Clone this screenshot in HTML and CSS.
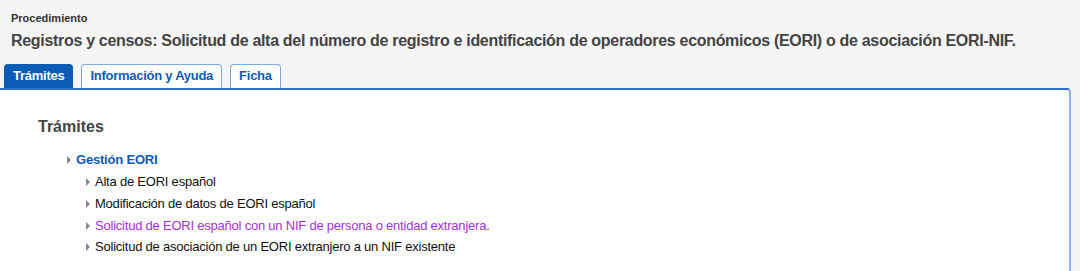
FILE: index.html
```
<!DOCTYPE html>
<html lang="es">
<head>
<meta charset="utf-8">
<link rel="stylesheet" href="styles.css">
</head>
<body>
<div class="page">
  <div class="header">
    <div class="kicker">Procedimiento</div>
    <h1 class="title">Registros y censos: Solicitud de alta del número de registro e identificación de operadores económicos (EORI) o de asociación EORI-NIF.</h1>
  </div>
  <div class="tabs">
    <a class="tab active">Trámites</a>
    <a class="tab">Información y Ayuda</a>
    <a class="tab">Ficha</a>
  </div>
  <div class="panel">
    <h2 class="section">Trámites</h2>
    <ul class="tree">
      <li class="group"><span class="arrow"></span><a class="group-link">Gestión EORI</a>
        <ul class="items">
          <li><span class="arrow"></span><a class="item">Alta de EORI español</a></li>
          <li><span class="arrow"></span><a class="item">Modificación de datos de EORI español</a></li>
          <li><span class="arrow"></span><a class="item visited">Solicitud de EORI español con un NIF de persona o entidad extranjera.</a></li>
          <li><span class="arrow"></span><a class="item">Solicitud de asociación de un EORI extranjero a un NIF existente</a></li>
        </ul>
      </li>
    </ul>
  </div>
</div>
</body>
</html>
```
FILE: styles.css
```
html, body {
  margin: 0;
  padding: 0;
  background: #f5f5f5;
  font-family: "Liberation Sans", Arial, sans-serif;
}
.page {
  width: 1080px;
  height: 271px;
  overflow: hidden;
}
.header {
  padding: 11px 0 0 11px;
}
.kicker {
  font-size: 11px;
  font-weight: bold;
  color: #333;
  line-height: 14px;
}
.title {
  margin: 6px 0 0 0;
  font-size: 16px;
  font-weight: bold;
  color: #444;
  line-height: 20px;
  letter-spacing: -0.31px;
}
.tabs {
  display: flex;
  gap: 8px;
  padding-left: 4px;
  margin-top: 13px;
  height: 24px;
  align-items: flex-end;
}
.tab {
  display: block;
  box-sizing: border-box;
  height: 24px;
  padding: 0 8px;
  font-size: 13px;
  font-weight: bold;
  line-height: 22px;
  letter-spacing: -0.26px;
  color: #0b5cb5;
  background: #fff;
  border: 1px solid #7fa9dd;
  border-bottom: none;
  border-radius: 4px 4px 0 0;
}
.tab.active {
  background: #0b5cb5;
  border-color: #0b5cb5;
  color: #fff;
}
.panel {
  background: #fff;
  border-top: 2px solid #2d6fc2;
  border-right: 2px solid #8fb4e6;
  border-radius: 0 4px 0 0;
  width: 1071px;
  height: 200px;
  box-sizing: border-box;
  padding: 27px 0 0 38px;
}
.section {
  margin: 0;
  font-size: 16px;
  font-weight: bold;
  color: #444;
  line-height: 20px;
}
.tree, .items {
  list-style: none;
  margin: 0;
  padding: 0;
}
.tree {
  margin-top: 15px;
  padding-left: 29px;
}
.group {
  font-size: 13px;
  line-height: 16px;
  letter-spacing: -0.2px;
}
.group-link {
  color: #0b5cb5;
  font-weight: bold;
}
.items {
  margin-top: 6px;
  padding-left: 19px;
  display: flex;
  flex-direction: column;
  gap: 5.8px;
}
.items li {
  font-size: 13px;
  line-height: 16px;
  letter-spacing: -0.22px;
}
.item {
  color: #111;
}
.item.visited {
  color: #a333cf;
}
.arrow {
  display: inline-block;
  width: 0;
  height: 0;
  border-top: 4px solid transparent;
  border-bottom: 4px solid transparent;
  border-left: 4px solid #888;
  margin-right: 5px;
  vertical-align: 0;
}
```
